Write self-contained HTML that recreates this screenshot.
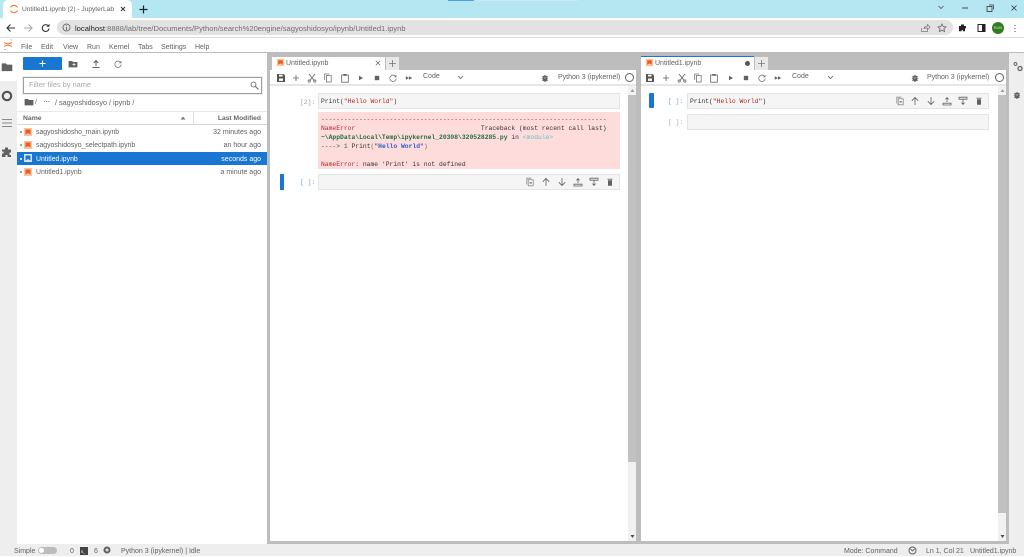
<!DOCTYPE html>
<html><head><meta charset="utf-8"><style>
html,body{margin:0;padding:0}
body{width:1024px;height:556px;overflow:hidden;position:relative;background:#fff;font-family:"Liberation Sans",sans-serif;color:#555}
.a,.t,svg.i{position:absolute}
.t{white-space:pre;font-size:7px;line-height:10px;color:#616161}
.m{font-family:"Liberation Mono",monospace;font-size:6.35px;line-height:9px;white-space:pre;position:absolute}
svg.i{overflow:visible}
</style></head><body>
<svg width="0" height="0" style="position:absolute"><defs>
<symbol id="nb" viewBox="0 0 10 10"><rect x="1" y="1" width="8" height="8" fill="#fbc4a0"/><path d="M2.500 2.500h5v5L5 6 2.500 7.500z" fill="#ef5a1e"/></symbol>
<symbol id="nbw" viewBox="0 0 10 10"><rect x="1" y="1" width="8" height="8" fill="#d9e8f8"/><path d="M2.500 2.500h5v5L5 6 2.500 7.500z" fill="#1976d2"/></symbol>
<symbol id="save" viewBox="0 0 10 10"><path d="M1 1h6.500L9 2.500V9H1z" fill="#555"/><rect x="3" y="1.700" width="3.600" height="1.800" fill="#fff"/><rect x="3" y="5.500" width="4" height="2.400" fill="#fff"/></symbol>
<symbol id="plus" viewBox="0 0 10 10"><path d="M5 2v6M2 5h6" stroke="#616161" stroke-width=".8"/></symbol>
<symbol id="cut" viewBox="0 0 10 10"><path d="M2 1l5.500 7M8 1L2.500 8" stroke="#616161" stroke-width=".8" fill="none"/><circle cx="2.200" cy="8" r="1.200" fill="none" stroke="#616161" stroke-width=".7"/><circle cx="7.800" cy="8" r="1.200" fill="none" stroke="#616161" stroke-width=".7"/></symbol>
<symbol id="copy" viewBox="0 0 10 10"><path d="M1.700 7V1h4.600" fill="none" stroke="#757575" stroke-width=".8"/><rect x="3.400" y="2.600" width="4.800" height="6.400" fill="none" stroke="#757575" stroke-width=".8"/></symbol>
<symbol id="paste" viewBox="0 0 10 10"><rect x="1.700" y="2" width="6.600" height="7.200" fill="none" stroke="#616161" stroke-width=".8"/><rect x="3.400" y="1" width="3.200" height="1.800" fill="#616161"/></symbol>
<symbol id="play" viewBox="0 0 10 10"><path d="M3 2.800L7 5 3 7.200z" fill="#616161"/></symbol>
<symbol id="stop" viewBox="0 0 10 10"><rect x="2.800" y="2.800" width="4.400" height="4.400" fill="#616161"/></symbol>
<symbol id="re" viewBox="0 0 10 10"><path d="M7.600 3.400A3.200 3.200 0 1 0 8.200 5.500" fill="none" stroke="#757575" stroke-width=".8"/><path d="M8.400 1.800v2.400H6z" fill="#757575"/></symbol>
<symbol id="ff" viewBox="0 0 10 10"><path d="M1.800 3.300L5 5 1.800 6.700zM5 3.300L8.200 5 5 6.700z" fill="#616161"/></symbol>
<symbol id="bug" viewBox="0 0 10 10"><ellipse cx="5" cy="5.500" rx="2.500" ry="3.200" fill="#616161"/><path d="M2 3l1.500 1M8 3L6.500 4M2 8l1.500-1M8 8L6.500 7M1.800 5.500h6.400" stroke="#616161" stroke-width=".6"/><path d="M3.800 5h2.400" stroke="#eee" stroke-width=".6"/></symbol>
<symbol id="dup" viewBox="0 0 10 10"><path d="M1.800 7.500V1.200h4.500" fill="none" stroke="#888" stroke-width=".8"/><rect x="3.200" y="2.800" width="5" height="6" fill="none" stroke="#888" stroke-width=".8"/><rect x="4.600" y="5" width="2.200" height="1.600" fill="#888"/></symbol>
<symbol id="up" viewBox="0 0 10 10"><path d="M5 9V1.500M1.800 4.800L5 1.500l3.200 3.300" fill="none" stroke="#616161" stroke-width=".8"/></symbol>
<symbol id="dn" viewBox="0 0 10 10"><path d="M5 1v7.500M1.800 5.200L5 8.500l3.200-3.300" fill="none" stroke="#616161" stroke-width=".8"/></symbol>
<symbol id="iu" viewBox="0 0 10 10"><path d="M1 7.200h8v1.800H1z" fill="none" stroke="#616161" stroke-width=".8"/><path d="M5 6V2M3.400 3.400L5 1.600l1.600 1.800" fill="none" stroke="#616161" stroke-width=".8"/></symbol>
<symbol id="id" viewBox="0 0 10 10"><path d="M1 1.200h8v2H1z" fill="none" stroke="#616161" stroke-width=".8"/><path d="M5 3.500V8M3.400 6.600L5 8.400l1.600-1.800" fill="none" stroke="#616161" stroke-width=".8"/></symbol>
<symbol id="del" viewBox="0 0 10 10"><path d="M3 3.200h4v5.600H3zM2.500 1.800h5v.8h-5z" fill="#616161"/></symbol>
<symbol id="folder" viewBox="0 0 10 10"><path d="M.6 2h3.400l1 1h4.400v5.400H.6z" fill="#616161"/></symbol>
</defs></svg>

<!-- browser chrome -->
<div class="a" style="left:0;top:0;width:1024px;height:18px;background:#b5e7f3"></div>
<div class="a" style="left:448px;top:0;width:26px;height:1px;background:#4aa3e8"></div>
<div class="a" style="left:474px;top:0;width:104px;height:1px;background:#cfe6ee"></div>
<div class="a" style="left:3px;top:0;width:129px;height:18px;background:#fff;border-radius:5px 5px 0 0"></div>
<svg class="i" style="left:9px;top:4px" width="10" height="10" viewBox="0 0 10 10"><path d="M1.500 3.500A4 4 0 0 1 8.500 3.500M1.500 6.500A4 4 0 0 0 8.500 6.500" fill="none" stroke="#f37726" stroke-width="1.100"/></svg>
<div class="t" style="left:22px;top:5px;font-size:6.6px;color:#5f6368">Untitled1.ipynb (2) - JupyterLab</div>
<svg class="i" style="left:120px;top:6px" width="6" height="6"><path d="M1 1l4 4M5 1L1 5" stroke="#333" stroke-width="1"/></svg>
<svg class="i" style="left:139px;top:5px" width="9" height="9"><path d="M4.500 .5v8M.5 4.500h8" stroke="#222" stroke-width="1.200"/></svg>
<svg class="i" style="left:930px;top:3px" width="94" height="10"><path d="M8.500 3l2.500 2.500L13.500 3" fill="none" stroke="#555" stroke-width=".8"/><path d="M32 5h6" stroke="#333" stroke-width=".9"/><rect x="57" y="3.500" width="5" height="5" fill="none" stroke="#333" stroke-width=".8"/><path d="M59 2h4.500v4.500" fill="none" stroke="#333" stroke-width=".7"/><path d="M81.500 2.500l5 5M86.500 2.500l-5 5" stroke="#333" stroke-width=".8"/></svg>

<div class="a" style="left:0;top:18px;width:1024px;height:19px;background:#fff"></div>
<svg class="i" style="left:6px;top:23px" width="50" height="10"><path d="M9 5H1.500M4.500 1.500L1 5l3.500 3.500" fill="none" stroke="#333" stroke-width="1.100"/><path d="M18 5h7.500M22.500 1.500L26 5l-3.500 3.500" fill="none" stroke="#aaa" stroke-width="1.100"/><path d="M42 2.600A3.400 3.400 0 1 0 43 5.500" fill="none" stroke="#333" stroke-width="1.100"/><path d="M43.500 .8v3h-3z" fill="#333"/></svg>
<div class="a" style="left:57px;top:20px;width:211px;height:15px;border-radius:8px 0 0 8px;background:#e2e2e2"></div>
<div class="a" style="left:268px;top:20px;width:685px;height:15px;border-radius:0 8px 8px 0;background:#e2e2e2"></div>
<svg class="i" style="left:62px;top:23px" width="9" height="9"><circle cx="4.500" cy="4.500" r="3.500" fill="none" stroke="#555" stroke-width=".8"/><path d="M4.500 4v3M4.500 2.300v.9" stroke="#555" stroke-width=".8"/></svg>
<div class="t" style="left:75px;top:24px;font-size:7.6px;color:#6f6f6f"><span style="color:#222">localhost</span>:8888/lab/tree/Documents/Python/search%20engine/sagyoshidosyo/ipynb/Untitled1.ipynb</div>
<svg class="i" style="left:920px;top:23px" width="50" height="10"><path d="M1.500 5v3.500h6V7M4 5.500C4.500 3.500 6 3 7.500 3V1.500L10 4 7.500 6.500V5C6 5 5 5 4 5.500z" fill="none" stroke="#777" stroke-width=".7"/><path d="M22 1l1.200 2.600 2.800.3-2.100 1.900.6 2.800L22 7.200l-2.500 1.400.6-2.800L18 3.900l2.800-.3z" fill="none" stroke="#555" stroke-width=".7"/><path d="M39 3h2V1.500h3V3h2v2.200h-1v3h-2.200V7h-1.200v1.200H39z" fill="#222"/></svg>
<svg class="i" style="left:977px;top:23px" width="10" height="10"><rect x="1" y="1.500" width="7" height="7" fill="#fff" stroke="#222" stroke-width="1"/><rect x="5" y="1.500" width="3" height="7" fill="#222"/></svg>
<div class="a" style="left:992px;top:22px;width:12px;height:12px;border-radius:50%;background:#2e7d1e"></div>
<div class="t" style="left:992px;top:23px;width:12px;text-align:center;font-size:4px;color:#cfe8c8">RUN</div>
<svg class="i" style="left:1013px;top:24px" width="4" height="9"><path d="M2 1v.8M2 4v.8M2 7v.8" stroke="#333" stroke-width="1.200"/></svg>
<div class="a" style="left:0;top:37px;width:1024px;height:1px;background:#dedede"></div>

<!-- menu -->
<svg class="i" style="left:3px;top:39px" width="10" height="13"><path d="M1 3.500C3 5 6 5 9 3.500M1 7.500C3 6 6 6 9 7.500" fill="none" stroke="#f37726" stroke-width="1"/><path d="M7.500 1h1M1.500 10.500h1" stroke="#e0632a" stroke-width="1"/></svg>
<div class="t" style="left:21px;top:43px">File</div><div class="t" style="left:41px;top:43px">Edit</div><div class="t" style="left:63px;top:43px">View</div><div class="t" style="left:87px;top:43px">Run</div><div class="t" style="left:109px;top:43px">Kernel</div><div class="t" style="left:138px;top:43px">Tabs</div><div class="t" style="left:161px;top:43px">Settings</div><div class="t" style="left:195px;top:43px">Help</div>
<div class="a" style="left:0;top:52px;width:1024px;height:1px;background:#bdbdbd"></div>

<!-- left sidebar -->
<div class="a" style="left:0;top:53px;width:17px;height:491px;background:#eee"></div>
<div class="a" style="left:0;top:53px;width:17px;height:28px;background:#fff"></div>
<svg class="i" style="left:1px;top:61px" width="12" height="12" viewBox="0 0 10 10"><use href="#folder"/></svg>
<svg class="i" style="left:1px;top:90px" width="12" height="12"><circle cx="6" cy="6" r="4.200" fill="none" stroke="#555" stroke-width="2.200"/></svg>
<svg class="i" style="left:2px;top:118px" width="10" height="10"><path d="M0 1.500h10M0 5h10M0 8.500h10" stroke="#8a8a8a" stroke-width="1"/></svg>
<svg class="i" style="left:1px;top:146px" width="12" height="12"><path d="M1 3.500h3V1.500h3v2h3v3h-1.500v2.500H10v2H6.500V9h-2v2H1V7.500h1.500v-2H1z" fill="#616161"/></svg>

<!-- file browser -->
<div class="a" style="left:23px;top:57px;width:39px;height:13px;background:#1976d2;border-radius:1px"></div>
<svg class="i" style="left:39px;top:60px" width="7" height="7"><path d="M3.500 .5v6M.5 3.500h6" stroke="#fff" stroke-width="1"/></svg>
<svg class="i" style="left:68px;top:59px" width="10" height="10" viewBox="0 0 10 10"><use href="#folder"/><path d="M4.500 5.500h3M6 4v3" stroke="#fff" stroke-width=".7"/></svg>
<svg class="i" style="left:91px;top:59px" width="10" height="10"><path d="M5 7V2M2.800 4L5 1.500 7.200 4" fill="none" stroke="#616161" stroke-width="1"/><path d="M1.500 8.500h7" stroke="#616161" stroke-width="1"/></svg>
<svg class="i" style="left:113px;top:59px" width="10" height="10" viewBox="0 0 10 10"><use href="#re"/></svg>
<div class="a" style="left:23px;top:77px;width:237px;height:15px;border:1px solid #9e9e9e;box-shadow:0 0 0 .5px #ddd;background:#fff"></div>
<div class="t" style="left:29px;top:80px;font-size:7.4px;color:#a8a8a8">Filter files by name</div>
<svg class="i" style="left:250px;top:81px" width="9" height="9"><circle cx="3.500" cy="3.500" r="2.500" fill="none" stroke="#616161" stroke-width=".8"/><path d="M5.500 5.500l3 3" stroke="#616161" stroke-width="1"/></svg>
<svg class="i" style="left:24px;top:97px" width="10" height="10" viewBox="0 0 10 10"><use href="#folder"/></svg>
<div class="t" style="left:35px;top:98px">/</div>
<div class="t" style="left:43px;top:98px">⋯</div>
<div class="t" style="left:55px;top:98px;font-size:7.25px">/ sagyoshidosyo / ipynb /</div>
<div class="a" style="left:17px;top:111px;width:250px;height:14px;background:#fff;border-top:1px solid #eaeaea;border-bottom:1px solid #d8d8d8;box-sizing:border-box"></div>
<div class="a" style="left:193px;top:112px;width:1px;height:12px;background:#e0e0e0"></div>
<div class="t" style="left:23px;top:114px;font-weight:bold;color:#666;font-size:6.8px">Name</div>
<svg class="i" style="left:180px;top:116px" width="6" height="4"><path d="M.5 3.500L3 .5l2.500 3z" fill="#777"/></svg>
<div class="t" style="right:763px;top:114px;font-weight:bold;color:#666;font-size:6.7px">Last Modified</div>

<div class="a" style="left:17px;top:152px;width:250px;height:13px;background:#1976d2"></div>
<div class="a" style="left:20px;top:131px;width:2px;height:2px;border-radius:50%;background:#4caf50"></div>
<div class="a" style="left:20px;top:144px;width:2px;height:2px;border-radius:50%;background:#4caf50"></div>
<div class="a" style="left:20px;top:158px;width:2px;height:2px;border-radius:50%;background:#fff"></div>
<div class="a" style="left:20px;top:171px;width:2px;height:2px;border-radius:50%;background:#4caf50"></div>
<svg class="i" style="left:23px;top:127px" width="10" height="10"><use href="#nb"/></svg>
<svg class="i" style="left:23px;top:140px" width="10" height="10"><use href="#nb"/></svg>
<svg class="i" style="left:23px;top:153px" width="10" height="10"><use href="#nbw"/></svg>
<svg class="i" style="left:23px;top:167px" width="10" height="10"><use href="#nb"/></svg>
<div class="t" style="left:36px;top:128px;font-size:6.9px">sagyoshidosho_main.ipynb</div>
<div class="t" style="left:36px;top:141px;font-size:6.9px">sagyoshidosyo_selectpath.ipynb</div>
<div class="t" style="left:36px;top:155px;color:#fff;font-size:6.9px">Untitled.ipynb</div>
<div class="t" style="left:36px;top:168px;font-size:6.9px">Untitled1.ipynb</div>
<div class="t" style="right:763px;top:128px">32 minutes ago</div>
<div class="t" style="right:763px;top:141px">an hour ago</div>
<div class="t" style="right:763px;top:155px;color:#fff">seconds ago</div>
<div class="t" style="right:763px;top:168px">a minute ago</div>

<!-- dock background -->
<div class="a" style="left:267px;top:53px;width:742px;height:491px;background:#bdbdbd"></div>
<div class="a" style="left:270px;top:70px;width:366px;height:471px;background:#fff"></div>
<div class="a" style="left:641px;top:70px;width:365px;height:471px;background:#fff"></div>
<!-- tabs -->
<div class="a" style="left:272px;top:57px;width:113px;height:13px;background:#fff"></div>
<div class="a" style="left:386px;top:57px;width:13px;height:13px;background:#e8e8e8"></div>
<div class="a" style="left:641px;top:56px;width:113px;height:14px;background:#fff;border-top:1px solid #1976d2;box-sizing:border-box"></div>
<div class="a" style="left:755px;top:57px;width:13px;height:13px;background:#e8e8e8"></div>
<svg class="i" style="left:276px;top:58px" width="9" height="9" viewBox="0 0 10 10"><use href="#nb"/></svg>
<svg class="i" style="left:645px;top:58px" width="9" height="9" viewBox="0 0 10 10"><use href="#nb"/></svg>
<div class="t" style="left:286px;top:59px">Untitled.ipynb</div>
<div class="t" style="left:655px;top:59px">Untitled1.ipynb</div>
<svg class="i" style="left:375px;top:60px" width="6" height="6"><path d="M.8.8l4.400 4.400M5.200.8L.8 5.200" stroke="#616161" stroke-width=".7"/></svg>
<div class="a" style="left:745px;top:61px;width:5px;height:5px;border-radius:50%;background:#555"></div>
<svg class="i" style="left:389px;top:60px" width="7" height="7"><path d="M3.500 0v7M0 3.500h7" stroke="#757575" stroke-width=".8"/></svg>
<svg class="i" style="left:758px;top:60px" width="7" height="7"><path d="M3.500 0v7M0 3.500h7" stroke="#757575" stroke-width=".8"/></svg>
<!-- toolbars -->
<div class="a" style="left:270px;top:84px;width:366px;height:2px;background:#e6e6e6"></div>
<div class="a" style="left:641px;top:84px;width:365px;height:2px;background:#e6e6e6"></div>
<svg class="i" style="left:276px;top:73px" width="10" height="10"><use href="#save"/></svg>
<svg class="i" style="left:291px;top:73px" width="10" height="10"><use href="#plus"/></svg>
<svg class="i" style="left:307px;top:73px" width="10" height="10"><use href="#cut"/></svg>
<svg class="i" style="left:323px;top:73px" width="10" height="10"><use href="#copy"/></svg>
<svg class="i" style="left:340px;top:73px" width="10" height="10"><use href="#paste"/></svg>
<svg class="i" style="left:356px;top:73px" width="10" height="10"><use href="#play"/></svg>
<svg class="i" style="left:372px;top:73px" width="10" height="10"><use href="#stop"/></svg>
<svg class="i" style="left:388px;top:73px" width="10" height="10"><use href="#re"/></svg>
<svg class="i" style="left:404px;top:73px" width="10" height="10"><use href="#ff"/></svg>
<div class="t" style="left:423px;top:72px">Code</div>
<svg class="i" style="left:457px;top:75px" width="7" height="5"><path d="M1 1l2.500 2.500L6 1" fill="none" stroke="#616161" stroke-width=".8"/></svg>
<svg class="i" style="left:540px;top:73px" width="10" height="10"><use href="#bug"/></svg>
<div class="t" style="left:558px;top:73px">Python 3 (ipykernel)</div>
<div class="a" style="left:625px;top:73px;width:7px;height:7px;border:1px solid #616161;border-radius:50%"></div>

<svg class="i" style="left:645px;top:73px" width="10" height="10"><use href="#save"/></svg>
<svg class="i" style="left:661px;top:73px" width="10" height="10"><use href="#plus"/></svg>
<svg class="i" style="left:677px;top:73px" width="10" height="10"><use href="#cut"/></svg>
<svg class="i" style="left:693px;top:73px" width="10" height="10"><use href="#copy"/></svg>
<svg class="i" style="left:709px;top:73px" width="10" height="10"><use href="#paste"/></svg>
<svg class="i" style="left:726px;top:73px" width="10" height="10"><use href="#play"/></svg>
<svg class="i" style="left:741px;top:73px" width="10" height="10"><use href="#stop"/></svg>
<svg class="i" style="left:757px;top:73px" width="10" height="10"><use href="#re"/></svg>
<svg class="i" style="left:773px;top:73px" width="10" height="10"><use href="#ff"/></svg>
<div class="t" style="left:792px;top:72px">Code</div>
<svg class="i" style="left:827px;top:75px" width="7" height="5"><path d="M1 1l2.500 2.500L6 1" fill="none" stroke="#616161" stroke-width=".8"/></svg>
<svg class="i" style="left:910px;top:73px" width="10" height="10"><use href="#bug"/></svg>
<div class="t" style="left:927px;top:73px">Python 3 (ipykernel)</div>
<div class="a" style="left:995px;top:73px;width:7px;height:7px;border:1px solid #616161;border-radius:50%"></div>

<!-- left notebook -->
<div class="m" style="left:300px;top:98px;color:#a0a0a0">[2]:</div>
<div class="a" style="left:318px;top:93px;width:302px;height:16px;background:#f5f5f5;border:1px solid #e4e4e4;box-sizing:border-box"></div>
<div class="m" style="left:321px;top:97px;color:#333">Print(<span style="color:#ba2121">"Hello World"</span>)</div>
<div class="a" style="left:318px;top:112px;width:302px;height:57px;background:#ffdcdc"></div>
<div class="m" style="left:321px;top:115px;color:#b22b31">---------------------------------------------------------------------------</div>
<div class="m" style="left:321px;top:124px;color:#333"><span style="color:#b22b31">NameError</span>                                 Traceback (most recent call last)</div>
<div class="m" style="left:321px;top:133px;color:#333"><b style="color:#1f6f3f">~\AppData\Local\Temp\ipykernel_20308\320528285.py</b> in <span style="color:#60c6c8">&lt;module&gt;</span></div>
<div class="m" style="left:321px;top:142px;color:#1f6f3f">----&gt; 1 <span style="color:#333">Print</span><span style="color:#a06a10">(</span><b style="color:#2a5fc4">"Hello World"</b><span style="color:#a06a10">)</span></div>
<div class="m" style="left:321px;top:160px;color:#333"><span style="color:#b22b31">NameError</span>: name 'Print' is not defined</div>
<div class="a" style="left:280px;top:174px;width:4px;height:16px;background:#1976d2"></div>
<div class="m" style="left:300px;top:178px;color:#6a9fd8">[ ]:</div>
<div class="a" style="left:318px;top:174px;width:302px;height:16px;background:#f5f5f5;border:1px solid #e4e4e4;box-sizing:border-box"></div>
<svg class="i" style="left:525px;top:177px" width="10" height="10"><use href="#dup"/></svg>
<svg class="i" style="left:541px;top:177px" width="10" height="10"><use href="#up"/></svg>
<svg class="i" style="left:557px;top:177px" width="10" height="10"><use href="#dn"/></svg>
<svg class="i" style="left:573px;top:177px" width="10" height="10"><use href="#iu"/></svg>
<svg class="i" style="left:589px;top:177px" width="10" height="10"><use href="#id"/></svg>
<svg class="i" style="left:605px;top:177px" width="10" height="10"><use href="#del"/></svg>
<div class="a" style="left:628px;top:86px;width:8px;height:455px;background:#f1f1f1"></div>
<div class="a" style="left:628px;top:95px;width:8px;height:367px;background:#c1c1c1"></div>
<svg class="i" style="left:630px;top:89px" width="5" height="3"><path d="M.5 3L2.500 0l2 3z" fill="#a0a0a0"/></svg>
<svg class="i" style="left:630px;top:535px" width="5" height="3"><path d="M.5 0l2 3 2-3z" fill="#505050"/></svg>

<!-- right notebook -->
<div class="a" style="left:649px;top:93px;width:5px;height:15px;background:#1976d2;border-radius:1px"></div>
<div class="m" style="left:668px;top:97px;color:#6a9fd8">[ ]:</div>
<div class="a" style="left:687px;top:93px;width:302px;height:16px;background:#f5f5f5;border:1px solid #e4e4e4;box-sizing:border-box"></div>
<div class="m" style="left:690px;top:97px;color:#333">Print(<span style="color:#ba2121">"Hello World"</span>)</div>
<svg class="i" style="left:895px;top:96px" width="10" height="10"><use href="#dup"/></svg>
<svg class="i" style="left:910px;top:96px" width="10" height="10"><use href="#up"/></svg>
<svg class="i" style="left:926px;top:96px" width="10" height="10"><use href="#dn"/></svg>
<svg class="i" style="left:942px;top:96px" width="10" height="10"><use href="#iu"/></svg>
<svg class="i" style="left:958px;top:96px" width="10" height="10"><use href="#id"/></svg>
<svg class="i" style="left:974px;top:96px" width="10" height="10"><use href="#del"/></svg>
<div class="m" style="left:668px;top:118px;color:#a8a8a8">[ ]:</div>
<div class="a" style="left:687px;top:114px;width:302px;height:16px;background:#f5f5f5;border:1px solid #e4e4e4;box-sizing:border-box"></div>
<div class="a" style="left:998px;top:86px;width:8px;height:455px;background:#f1f1f1"></div>
<div class="a" style="left:998px;top:95px;width:8px;height:418px;background:#c1c1c1"></div>
<svg class="i" style="left:1000px;top:89px" width="5" height="3"><path d="M.5 3L2.500 0l2 3z" fill="#a0a0a0"/></svg>
<svg class="i" style="left:1000px;top:535px" width="5" height="3"><path d="M.5 0l2 3 2-3z" fill="#505050"/></svg>

<!-- right sidebar -->
<div class="a" style="left:1009px;top:53px;width:15px;height:491px;background:#eee"></div>
<svg class="i" style="left:1013px;top:61px" width="11" height="12"><circle cx="2.500" cy="3" r="1.500" fill="none" stroke="#616161" stroke-width=".9"/><circle cx="7" cy="7.500" r="2" fill="none" stroke="#616161" stroke-width="1.300"/></svg>
<svg class="i" style="left:1012px;top:90px" width="10" height="10"><use href="#bug"/></svg>

<!-- status -->
<div class="a" style="left:0;top:544px;width:1024px;height:12px;background:#eee"></div>
<div class="t" style="left:14px;top:547px">Simple</div>
<div class="a" style="left:38px;top:547px;width:19px;height:7px;background:#bdbdbd;border-radius:4px"></div>
<div class="a" style="left:39px;top:548px;width:5px;height:5px;background:#fff;border-radius:50%"></div>
<div class="t" style="left:70px;top:547px">0</div>
<div class="a" style="left:80px;top:547px;width:8px;height:8px;background:#444"></div>
<div class="t" style="left:81px;top:548px;font-size:4px;line-height:7px;color:#ddd">$_</div>
<div class="t" style="left:94px;top:547px">6</div>
<svg class="i" style="left:103px;top:546px" width="8" height="8"><circle cx="4" cy="4" r="3.500" fill="#616161"/><circle cx="4" cy="4" r="1.500" fill="#ddd"/></svg>
<div class="t" style="left:121px;top:547px">Python 3 (ipykernel) | Idle</div>
<div class="t" style="left:844px;top:547px">Mode: Command</div>
<svg class="i" style="left:908px;top:546px" width="9" height="9"><circle cx="4.500" cy="4.500" r="3.500" fill="none" stroke="#616161" stroke-width="1"/><path d="M2.500 3l2 2 2-2" fill="none" stroke="#616161" stroke-width=".9"/></svg>
<div class="t" style="left:926px;top:547px">Ln 1, Col 21</div>
<div class="t" style="left:970px;top:547px">Untitled1.ipynb</div>
</body></html>
